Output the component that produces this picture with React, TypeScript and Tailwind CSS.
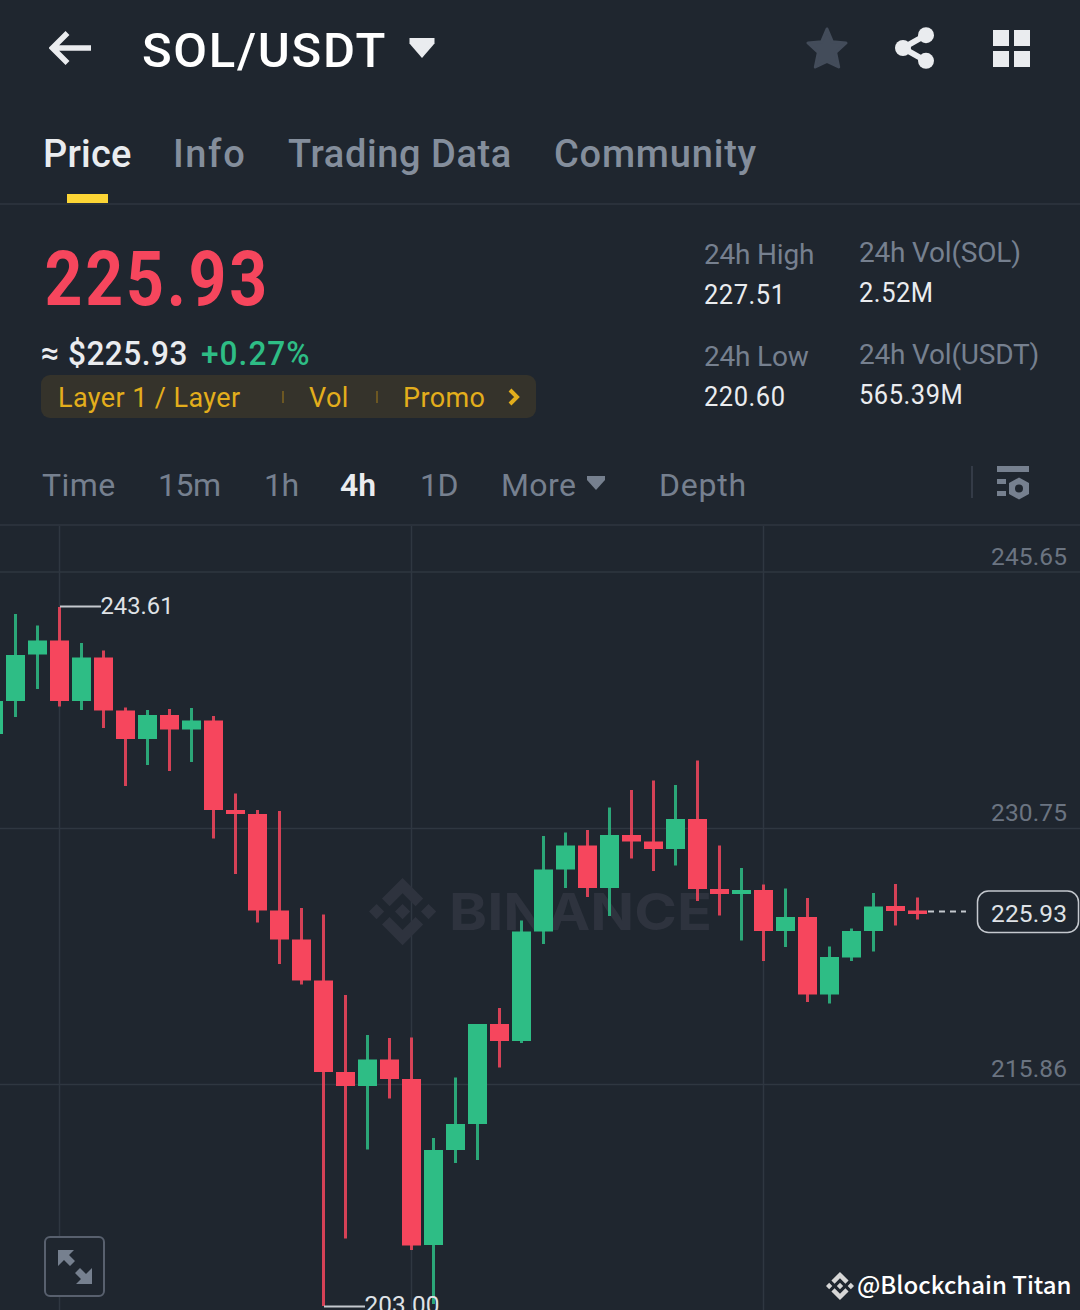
const GREEN = "#2ebd85";
const RED = "#f6465d";

const tabs = [
  { label: "Price", className: "w-[130px] tracking-[0.2px] text-[#eaecef]", active: true },
  { label: "Info", className: "w-[115px] tracking-[1.6px] text-[#848e9c]" },
  { label: "Trading Data", className: "w-[266px] tracking-[0.6px] text-[#848e9c]" },
  { label: "Community", className: "tracking-[0.8px] text-[#848e9c]" },
];

const intervals = [
  { label: "Time", className: "w-[116px] text-[#76808f]" },
  { label: "15m", className: "w-[106px] tracking-[-0.5px] text-[#76808f]" },
  { label: "1h", className: "w-[76px] tracking-[-0.5px] text-[#76808f]" },
  { label: "4h", className: "w-[80px] font-semibold tracking-[0px] text-[#eaecef]" },
  { label: "1D", className: "w-[81px] tracking-[-0.5px] text-[#76808f]" },
];

const gridX = [59.5, 411.5, 763.5];

const gridY = [
  { y: 572, price: "245.65" },
  { y: 828.5, price: "230.75" },
  { y: 1084.5, price: "215.86" },
];

// [up, wick top, wick bottom, body top, body bottom]
const candles: [boolean, number, number, number, number][] = [
  [true, 701, 734, 701, 734],
  [true, 614, 717, 655, 701],
  [true, 625.5, 689, 640.5, 654.5],
  [false, 607, 706.5, 640.5, 701],
  [true, 643, 710, 657.5, 701],
  [false, 650.5, 728, 657.5, 710.5],
  [false, 707.5, 786, 710.5, 739],
  [true, 710, 765, 715, 739],
  [false, 709, 771, 715, 729.5],
  [true, 708, 762, 720.5, 729.5],
  [false, 716, 838.5, 720.5, 810],
  [false, 793.5, 874, 810, 814],
  [false, 810, 922.5, 814, 910.5],
  [false, 811, 964, 910.5, 939.5],
  [false, 908, 984.5, 939.5, 980.5],
  [false, 914.5, 1306, 980.5, 1072],
  [false, 995, 1238.5, 1072, 1086],
  [true, 1035, 1149.5, 1059.5, 1086],
  [false, 1038, 1098.5, 1059.5, 1079],
  [false, 1037.5, 1250, 1079, 1245.5],
  [true, 1138, 1304, 1150, 1245],
  [true, 1077.5, 1163, 1124, 1150],
  [true, 1024, 1160, 1024, 1124],
  [false, 1008, 1067.5, 1024, 1041],
  [true, 920.5, 1043, 931.5, 1041],
  [true, 836, 944, 869.5, 931.5],
  [true, 832.5, 888, 845.5, 869.5],
  [false, 830, 897, 845.5, 888],
  [true, 807.5, 916, 835, 888],
  [false, 790, 858.5, 835, 841.5],
  [false, 780.5, 871, 841.5, 849],
  [true, 785, 865.5, 819, 849],
  [false, 760.5, 901, 819, 889],
  [false, 845.5, 915.5, 889, 894],
  [true, 868, 940.5, 890, 894],
  [false, 884.5, 961, 890, 931],
  [true, 888.5, 947, 917, 931],
  [false, 898, 1002, 917, 994.5],
  [true, 946.5, 1003.5, 957, 994.5],
  [true, 928.5, 961, 931, 957.5],
  [true, 893, 951.5, 906.5, 931],
  [false, 884, 925.5, 906, 911],
  [false, 897.5, 919.5, 910.5, 914],
];

const BINANCE_PATH =
  "M16.624 13.9202l2.7175 2.7154-7.353 7.353-7.353-7.352 2.7175-2.7164 4.6355 4.6595 4.6356-4.6595zm4.6366-4.6366L24 12l-2.7154 2.7164L18.5682 12l2.6924-2.7164zm-9.272.001l2.7163 2.6914-2.7164 2.7174v-.001L9.2721 12l2.7164-2.7154zm-9.2722-.001L5.4088 12l-2.6914 2.6924L0 12l2.7164-2.7164zM11.9885.0115l7.353 7.329-2.7174 2.7154-4.6356-4.6356-4.6355 4.6595-2.7174-2.7154 7.353-7.353z";

function Header() {
  return (
    <header className="flex h-24 items-center pl-[49px] pr-[50px] text-[#eaecef]">
      <svg width="43" height="34" viewBox="0 0 43 34" fill="none" stroke="currentColor" strokeWidth="5.5">
        <path d="M42 17H5M18.5 2 3.5 17l15 15" />
      </svg>
      <h1 className="ml-[50px] pt-1 text-[49px] font-medium leading-none tracking-[1.7px] text-white">
        SOL/USDT
      </h1>
      <svg className="ml-[22px]" width="26" height="20" viewBox="0 0 26 20" fill="currentColor">
        <path d="M.5 0h25v5.500L13 20 .5 5.500z" />
      </svg>

      <div className="ml-auto flex items-center">
        <svg width="42" height="44" viewBox="0 0 42 44" fill="#434c5a" stroke="#434c5a" strokeWidth="3" strokeLinejoin="round">
          <path d="M21 3l5.300 12.700 13.700 1.300-10.300 9.500 3 14.500L21 35.500 9.300 41l3-14.500L2 17l13.700-1.300z" />
        </svg>
        <svg className="ml-[47px]" width="40" height="42" viewBox="0 0 40 42" fill="currentColor">
          <path d="M31 8 8 21l23 13" fill="none" stroke="currentColor" strokeWidth="6" />
          <circle cx="31" cy="8.200" r="8" />
          <circle cx="8" cy="21" r="8" />
          <circle cx="31" cy="33.800" r="8" />
        </svg>
        <div className="ml-[58px] grid grid-cols-2 gap-[5px]">
          <span className="size-4 bg-current" />
          <span className="size-4 bg-current" />
          <span className="size-4 bg-current" />
          <span className="size-4 bg-current" />
        </div>
      </div>
    </header>
  );
}

function Tabs() {
  return (
    <nav className="flex h-[109px] border-b-2 border-[#2a313b] pl-[43px] pt-9 text-[38px] font-medium leading-[44px]">
      {tabs.map((tab) => (
        <div key={tab.label} className={tab.className}>
          <span className="inline-flex flex-col items-center whitespace-nowrap">
            {tab.label}
            {tab.active && <span className="mt-[18px] h-[9px] w-[41px] bg-[#fcd535]" />}
          </span>
        </div>
      ))}
    </nav>
  );
}

function Stat({ label, value }: { label: string; value: string }) {
  return (
    <div className="whitespace-nowrap text-[28px] leading-10">
      <div className="tracking-[-0.2px] text-[#76808f]">{label}</div>
      <div className="origin-left scale-x-[0.91] tracking-[0.6px] text-[#eaecef]">{value}</div>
    </div>
  );
}

function Summary() {
  return (
    <section className="flex h-60 pl-[41px]">
      <div className="w-[663px] pt-9">
        <div className="origin-left scale-x-[0.87] pl-[4px] text-[76px] font-bold leading-[76px] tracking-[3.2px] text-[#f6465d]">
          225.93
        </div>
        <div className="mt-[18px] flex text-[34px] font-medium leading-9">
          <span className="w-[27px] text-[32px] text-[#eaecef]">≈</span>
          <span className="w-[133px] origin-left scale-x-[0.93] tracking-[0.5px] text-[#eaecef]">$225.93</span>
          <span className="origin-left scale-x-[0.93] tracking-[1.1px] text-[#2ebd85]">+0.27%</span>
        </div>
        <div className="mt-1 flex h-[43px] w-[495px] items-center rounded-[9px] bg-[#35332b] pl-[17px] text-[27px] text-[#e3ae1c]">
          <span className="w-[224px] pt-[3px] tracking-[0.4px]">Layer 1 / Layer</span>
          <span className="h-3 w-0.5 bg-[#6c5722]" />
          <span className="ml-[25px] w-[67px] pt-[3px] tracking-[0.4px]">Vol</span>
          <span className="h-3 w-0.5 bg-[#6c5722]" />
          <span className="ml-[25px] w-[105px] pt-[3px] tracking-[0.4px]">Promo</span>
          <svg width="12" height="18" viewBox="0 0 12 18" fill="none" stroke="currentColor" strokeWidth="4">
            <path d="M2 2l7 7-7 7" />
          </svg>
        </div>
      </div>
      <div className="flex w-[155px] flex-col gap-[22px] pt-[30px]">
        <Stat label="24h High" value="227.51" />
        <Stat label="24h Low" value="220.60" />
      </div>
      <div className="flex flex-col gap-[22px] pt-7">
        <Stat label="24h Vol(SOL)" value="2.52M" />
        <Stat label="24h Vol(USDT)" value="565.39M" />
      </div>
    </section>
  );
}

function IntervalBar() {
  return (
    <div className="flex h-[81px] items-center border-b-2 border-[#2a313b] pl-[42px] pr-[50px] text-[32px] tracking-[0.4px] text-[#76808f]">
      {intervals.map((item) => (
        <span key={item.label} className={item.className}>
          {item.label}
        </span>
      ))}
      <span className="w-[86px]">More</span>
      <svg className="-mt-1" width="18" height="14" viewBox="0 0 18 14" fill="currentColor">
        <path d="M0 0h18v4L9 14 0 4z" />
      </svg>
      <span className="ml-[54px] tracking-[0.8px]">Depth</span>
      <span className="mb-[5px] ml-auto mr-6 h-8 w-0.5 bg-[#343b47]" />
      <svg className="mb-1" width="33" height="34" viewBox="0 0 33 34" fill="#76808f">
        <path d="M0 0h32v6H0zM0 13h9v5H0zM0 25h9v5H0z" />
        <path fillRule="evenodd" d="M22 11.500l10 5.500v11l-10 5.500-10-5.500V17zM22 18.500a4 4 0 1 0 0 8 4 4 0 0 0 0-8z" />
      </svg>
    </div>
  );
}

function Chart() {
  return (
    <svg className="block" width="1080" height="784" viewBox="0 526 1080 784" fontFamily="Roboto, sans-serif" fontSize="24.5">
      {/* Grid */}
      <g stroke="#2f3741" strokeWidth="1.5">
        {gridX.map((x) => (
          <line key={x} x1={x} x2={x} y1="526" y2="1310" />
        ))}
        {gridY.map(({ y }) => (
          <line key={y} x1="0" x2="1080" y1={y} y2={y} />
        ))}
      </g>

      {/* Watermark */}
      <g fill="#2e333e">
        <path d={BINANCE_PATH} transform="translate(369 878) scale(2.8)" />
        <text x="449" y="930" fontFamily="Inter, sans-serif" fontSize="51" fontWeight="700" textLength="263" lengthAdjust="spacingAndGlyphs">
          BINANCE
        </text>
      </g>

      {/* Candles */}
      {candles.map(([up, high, low, top, bottom], i) => {
        const x = 22 * i - 6.5;
        return (
          <g key={i} fill={up ? GREEN : RED}>
            <rect x={x - 1.5} y={high} width="3" height={low - high} opacity="0.85" />
            <rect x={x - 9.5} y={top} width="19" height={bottom - top} />
          </g>
        );
      })}

      {/* High / low markers */}
      <g stroke="#c4c8ce" strokeWidth="2">
        <path d="M60 606.500h41M324 1306.500h41" />
        <path d="M928 911.500h38" strokeDasharray="6 5" />
      </g>
      <g fill="#dfe2e6">
        <text x="100.500" y="614" textLength="73" lengthAdjust="spacingAndGlyphs">243.61</text>
        <text x="364.500" y="1313" textLength="75" lengthAdjust="spacingAndGlyphs">203.00</text>
      </g>

      {/* Price axis */}
      <g fill="#6b7481">
        {gridY.map(({ y, price }) => (
          <text key={price} x="991" y={y - 7.5} textLength="76">
            {price}
          </text>
        ))}
      </g>
      <rect x="977.500" y="891" width="101" height="41.500" rx="11" fill="#1f262f" stroke="#c4c8ce" strokeWidth="1.500" />
      <text x="991" y="922" fill="#dfe2e6" textLength="76">
        225.93
      </text>
    </svg>
  );
}

export default function App() {
  return (
    <main className="relative h-[1310px] w-[1080px] overflow-hidden bg-[#1f262f] font-[Roboto,sans-serif]">
      <Header />
      <Tabs />
      <Summary />
      <IntervalBar />
      <Chart />

      {/* Fullscreen toggle */}
      <button className="absolute left-11 top-[1236px] flex size-[61px] items-center justify-center rounded-md border-2 border-[#58606e] bg-[#1f262f]">
        <svg width="34" height="34" viewBox="0 0 34 34" fill="#76808f">
          <path d="M0 0h16l-5 5 6 6-5 5-6-6-6 6zM34 34H18l5-5-6-6 5-5 6 6 6-6z" />
        </svg>
      </button>

      {/* Author tag */}
      <div className="absolute left-[826px] top-[1266px] flex h-10 items-center whitespace-nowrap text-white">
        <svg width="28" height="28" viewBox="0 0 24 24" fill="#d6d6d6">
          <path d={BINANCE_PATH} />
        </svg>
        <span className="-mt-1 ml-[3px] font-['Noto_Sans_CJK_SC',sans-serif] text-[24px] font-medium leading-10">
          @Blockchain Titan
        </span>
      </div>
    </main>
  );
}
